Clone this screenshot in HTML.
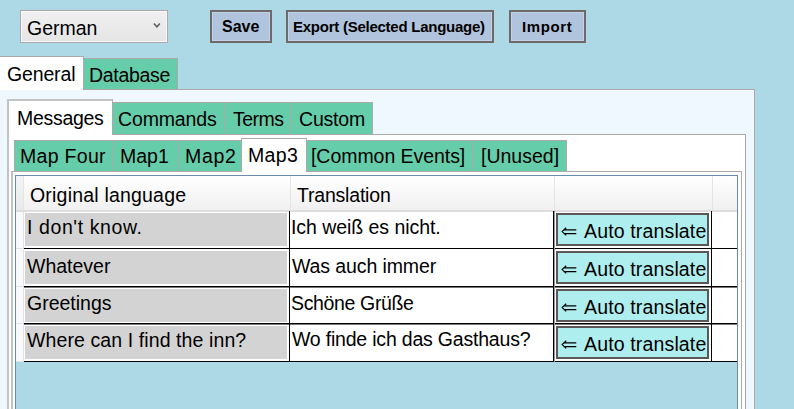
<!DOCTYPE html>
<html><head><meta charset="utf-8"><style>
html,body{margin:0;padding:0;}
body{width:794px;height:409px;overflow:hidden;position:relative;background:#ADD8E6;font-family:"Liberation Sans", sans-serif;color:#000;}
.b{position:absolute;box-sizing:border-box;}
.t{position:absolute;white-space:pre;}
</style></head><body>
<div class="b" style="left:20px;top:10px;width:148px;height:33px;background:linear-gradient(#F0F0F0,#E5E5E5);border:1px solid #ADA9AB;box-shadow:inset 0 0 0 1px #F8F8F8"></div>
<div class="b" style="left:210px;top:10px;width:62px;height:33px;background:#B0C4DE;border:2px solid #6E6A6A;box-shadow:inset 0 0 0 1px #C4D2E6"></div>
<div class="b" style="left:286px;top:10px;width:208px;height:33px;background:#B0C4DE;border:2px solid #6E6A6A;box-shadow:inset 0 0 0 1px #C4D2E6"></div>
<div class="b" style="left:509px;top:10px;width:77px;height:33px;background:#B0C4DE;border:2px solid #6E6A6A;box-shadow:inset 0 0 0 1px #C4D2E6"></div>
<div class="b" style="left:-2px;top:89px;width:757px;height:342px;background:#F0F8FF;border:1px solid #ADA9AB"></div>
<div class="b" style="left:83px;top:58px;width:95px;height:32px;background:#66CDAA;border:1px solid #ADA9AB"></div>
<div class="b" style="left:-2px;top:56px;width:86px;height:34px;background:#fff;border:1px solid #ADA9AB;border-bottom:none"></div>
<div class="b" style="left:7px;top:134px;width:739px;height:297px;background:#fff;border:1px solid #ADA9AB;border-left:2px solid #C2C2C2"></div>
<div class="b" style="left:112px;top:102px;width:113px;height:33px;background:#66CDAA;border:1px solid #ADA9AB"></div>
<div class="b" style="left:224px;top:102px;width:68px;height:33px;background:#66CDAA;border:1px solid #ADA9AB"></div>
<div class="b" style="left:291px;top:102px;width:82px;height:33px;background:#66CDAA;border:1px solid #ADA9AB"></div>
<div class="b" style="left:7px;top:99px;width:106px;height:36px;background:#fff;border:1px solid #ADA9AB;border-left:2px solid #C2C2C2;border-top:2px solid #C4C4C4;border-bottom:none"></div>
<div class="b" style="left:11px;top:171px;width:731px;height:260px;background:#fff;border:1px solid #ADA9AB;border-left:2px solid #C2C2C2"></div>
<div class="b" style="left:14px;top:140px;width:99px;height:32px;background:#66CDAA;border:1px solid #ADA9AB"></div>
<div class="b" style="left:112px;top:140px;width:67px;height:32px;background:#66CDAA;border:1px solid #ADA9AB"></div>
<div class="b" style="left:178px;top:140px;width:64px;height:32px;background:#66CDAA;border:1px solid #ADA9AB"></div>
<div class="b" style="left:306px;top:140px;width:167px;height:32px;background:#66CDAA;border:1px solid #ADA9AB"></div>
<div class="b" style="left:472px;top:140px;width:95px;height:32px;background:#66CDAA;border:1px solid #ADA9AB"></div>
<div class="b" style="left:241px;top:138px;width:66px;height:34px;background:#fff;border:1px solid #ADA9AB;border-bottom:none"></div>
<div class="b" style="left:15px;top:175px;width:723px;height:256px;background:#ADD8E6;border:1px solid #688CAF"></div>
<div class="b" style="left:16px;top:176px;width:721px;height:36px;background:linear-gradient(#FFFFFF,#F0F0F0);border-bottom:2px solid #DEDEDE"></div>
<div class="b" style="left:16px;top:176px;width:8px;height:34px;background:linear-gradient(#F4F4F4,#EAEAEA)"></div>
<div class="b" style="left:23px;top:176px;width:1px;height:34px;background:#E4E4E4"></div>
<div class="b" style="left:290px;top:176px;width:1px;height:34px;background:#E4E4E4"></div>
<div class="b" style="left:554px;top:176px;width:1px;height:34px;background:#E4E4E4"></div>
<div class="b" style="left:712px;top:176px;width:1px;height:34px;background:#E4E4E4"></div>
<div class="b" style="left:16px;top:212px;width:8px;height:37px;background:#F9F9FB;border-right:1px solid #E2E2E2;border-bottom:1px solid #E2E2E2"></div>
<div class="b" style="left:24px;top:212px;width:713px;height:36px;background:#fff"></div>
<div class="b" style="left:25px;top:213px;width:262px;height:33px;background:#D3D3D3"></div>
<div class="b" style="left:556px;top:213px;width:153px;height:33px;background:#AFEEEE;border:2px solid #5C5757"></div>
<div class="b" style="left:16px;top:249px;width:8px;height:38px;background:#F9F9FB;border-right:1px solid #E2E2E2;border-bottom:1px solid #E2E2E2"></div>
<div class="b" style="left:24px;top:249px;width:713px;height:37px;background:#fff"></div>
<div class="b" style="left:25px;top:251px;width:262px;height:33px;background:#D3D3D3"></div>
<div class="b" style="left:556px;top:251px;width:153px;height:33px;background:#AFEEEE;border:2px solid #5C5757"></div>
<div class="b" style="left:16px;top:287px;width:8px;height:37px;background:#F9F9FB;border-right:1px solid #E2E2E2;border-bottom:1px solid #E2E2E2"></div>
<div class="b" style="left:24px;top:287px;width:713px;height:36px;background:#fff"></div>
<div class="b" style="left:25px;top:289px;width:262px;height:33px;background:#D3D3D3"></div>
<div class="b" style="left:556px;top:289px;width:153px;height:33px;background:#AFEEEE;border:2px solid #5C5757"></div>
<div class="b" style="left:16px;top:324px;width:8px;height:38px;background:#F9F9FB;border-right:1px solid #E2E2E2;border-bottom:1px solid #E2E2E2"></div>
<div class="b" style="left:24px;top:324px;width:713px;height:37px;background:#fff"></div>
<div class="b" style="left:25px;top:326px;width:262px;height:33px;background:#D3D3D3"></div>
<div class="b" style="left:556px;top:326px;width:153px;height:33px;background:#AFEEEE;border:2px solid #5C5757"></div>
<div class="b" style="left:24px;top:248px;width:713px;height:1px;background:#000"></div>
<div class="b" style="left:24px;top:286px;width:713px;height:1px;background:#000"></div>
<div class="b" style="left:24px;top:323px;width:713px;height:1px;background:#000"></div>
<div class="b" style="left:24px;top:361px;width:713px;height:1px;background:#000"></div>
<div class="b" style="left:24px;top:287px;width:713px;height:1px;background:#777"></div>
<div class="b" style="left:24px;top:324px;width:713px;height:1px;background:#777"></div>
<div class="b" style="left:289px;top:211px;width:1px;height:151px;background:#000"></div>
<div class="b" style="left:553px;top:211px;width:1px;height:151px;background:#000"></div>
<div class="b" style="left:711px;top:211px;width:1px;height:151px;background:#000"></div>
<div class="b" style="left:554px;top:211px;width:1px;height:151px;background:#999"></div>
<svg class="b" style="left:153px;top:22px" width="8" height="7" viewBox="0 0 8 7"><path d="M0.9 1.6 L3.9 4.8 L6.9 1.6" fill="none" stroke="#5A5A5A" stroke-width="1.5"/></svg>
<svg class="b" style="left:561px;top:227px" width="16" height="10" viewBox="0 0 16 10"><path d="M5.2 0.8 L1.2 4.6 L5.2 8.4 M2.6 2.8 H15.3 M2.6 6.5 H15.3" fill="none" stroke="#000" stroke-width="1.25"/></svg>
<svg class="b" style="left:561px;top:265px" width="16" height="10" viewBox="0 0 16 10"><path d="M5.2 0.8 L1.2 4.6 L5.2 8.4 M2.6 2.8 H15.3 M2.6 6.5 H15.3" fill="none" stroke="#000" stroke-width="1.25"/></svg>
<svg class="b" style="left:561px;top:303px" width="16" height="10" viewBox="0 0 16 10"><path d="M5.2 0.8 L1.2 4.6 L5.2 8.4 M2.6 2.8 H15.3 M2.6 6.5 H15.3" fill="none" stroke="#000" stroke-width="1.25"/></svg>
<svg class="b" style="left:561px;top:340px" width="16" height="10" viewBox="0 0 16 10"><path d="M5.2 0.8 L1.2 4.6 L5.2 8.4 M2.6 2.8 H15.3 M2.6 6.5 H15.3" fill="none" stroke="#000" stroke-width="1.25"/></svg>
<span class="t" style="left:27px;top:19px;font-size:19.5px;line-height:19.5px;font-weight:400;letter-spacing:0.0px">German</span>
<span class="t" style="left:222px;top:19px;font-size:16px;line-height:16px;font-weight:700;letter-spacing:0.0px">Save</span>
<span class="t" style="left:293px;top:19px;font-size:15px;line-height:15px;font-weight:700;letter-spacing:-0.25px">Export (Selected Language)</span>
<span class="t" style="left:522px;top:19px;font-size:15px;line-height:15px;font-weight:700;letter-spacing:0.6px">Import</span>
<span class="t" style="left:7px;top:65px;font-size:19.5px;line-height:19.5px;font-weight:400;letter-spacing:-0.15px">General</span>
<span class="t" style="left:89px;top:66px;font-size:19.5px;line-height:19.5px;font-weight:400;letter-spacing:-0.3px">Database</span>
<span class="t" style="left:17px;top:109px;font-size:19.5px;line-height:19.5px;font-weight:400;letter-spacing:-0.3px">Messages</span>
<span class="t" style="left:118px;top:110px;font-size:19.5px;line-height:19.5px;font-weight:400;letter-spacing:-0.15px">Commands</span>
<span class="t" style="left:233px;top:110px;font-size:19.5px;line-height:19.5px;font-weight:400;letter-spacing:-0.5px">Terms</span>
<span class="t" style="left:299px;top:110px;font-size:19.5px;line-height:19.5px;font-weight:400;letter-spacing:-0.2px">Custom</span>
<span class="t" style="left:20px;top:147px;font-size:19.5px;line-height:19.5px;font-weight:400;letter-spacing:0.3px">Map Four</span>
<span class="t" style="left:120px;top:147px;font-size:19.5px;line-height:19.5px;font-weight:400;letter-spacing:0.0px">Map1</span>
<span class="t" style="left:185px;top:147px;font-size:19.5px;line-height:19.5px;font-weight:400;letter-spacing:0.65px">Map2</span>
<span class="t" style="left:248px;top:146px;font-size:19.5px;line-height:19.5px;font-weight:400;letter-spacing:0.35px">Map3</span>
<span class="t" style="left:311px;top:147px;font-size:19.5px;line-height:19.5px;font-weight:400;letter-spacing:-0.05px">[Common Events]</span>
<span class="t" style="left:481px;top:147px;font-size:19.5px;line-height:19.5px;font-weight:400;letter-spacing:0.0px">[Unused]</span>
<span class="t" style="left:30px;top:186px;font-size:19.5px;line-height:19.5px;font-weight:400;letter-spacing:0.2px">Original language</span>
<span class="t" style="left:297px;top:186px;font-size:19.5px;line-height:19.5px;font-weight:400;letter-spacing:-0.2px">Translation</span>
<span class="t" style="left:27px;top:218px;font-size:19.5px;line-height:19.5px;font-weight:400;letter-spacing:0.6px">I don't know.</span>
<span class="t" style="left:27px;top:257px;font-size:19.5px;line-height:19.5px;font-weight:400;letter-spacing:0.0px">Whatever</span>
<span class="t" style="left:27px;top:294px;font-size:19.5px;line-height:19.5px;font-weight:400;letter-spacing:0.0px">Greetings</span>
<span class="t" style="left:27px;top:331px;font-size:19.5px;line-height:19.5px;font-weight:400;letter-spacing:0.1px">Where can I find the inn?</span>
<span class="t" style="left:291px;top:218px;font-size:19.5px;line-height:19.5px;font-weight:400;letter-spacing:-0.05px">Ich weiß es nicht.</span>
<span class="t" style="left:292px;top:257px;font-size:19.5px;line-height:19.5px;font-weight:400;letter-spacing:-0.1px">Was auch immer</span>
<span class="t" style="left:291px;top:294px;font-size:19.5px;line-height:19.5px;font-weight:400;letter-spacing:-0.35px">Schöne Grüße</span>
<span class="t" style="left:292px;top:330px;font-size:19.5px;line-height:19.5px;font-weight:400;letter-spacing:-0.2px">Wo finde ich das Gasthaus?</span>
<span class="t" style="left:584px;top:222px;font-size:19.5px;line-height:19.5px;font-weight:400;letter-spacing:0.15px">Auto translate</span>
<span class="t" style="left:584px;top:260px;font-size:19.5px;line-height:19.5px;font-weight:400;letter-spacing:0.15px">Auto translate</span>
<span class="t" style="left:584px;top:298px;font-size:19.5px;line-height:19.5px;font-weight:400;letter-spacing:0.15px">Auto translate</span>
<span class="t" style="left:584px;top:335px;font-size:19.5px;line-height:19.5px;font-weight:400;letter-spacing:0.15px">Auto translate</span>
</body></html>
